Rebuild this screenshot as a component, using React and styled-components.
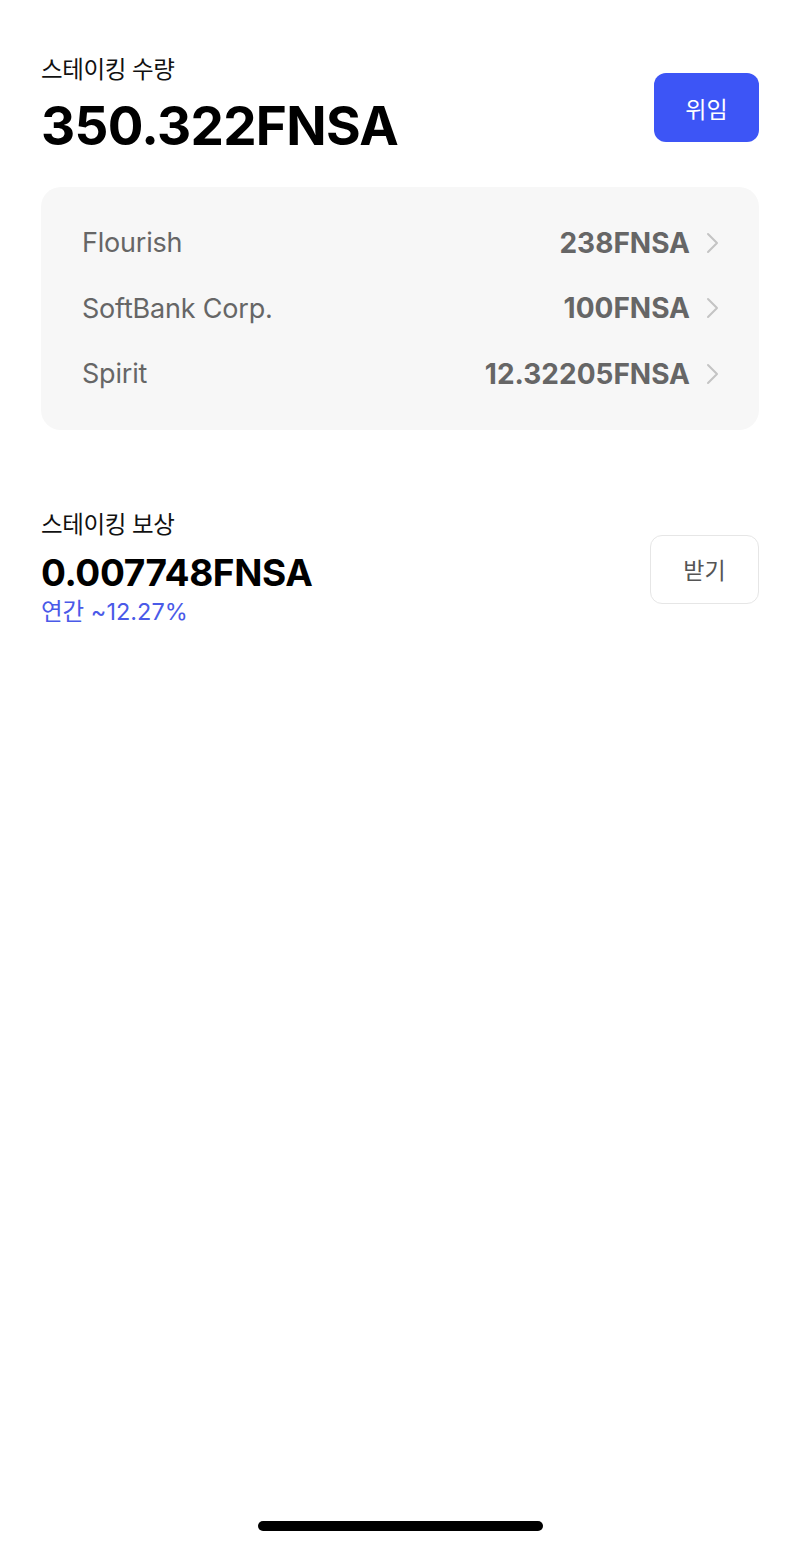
import React from 'react';
import styled, { createGlobalStyle } from 'styled-components';

const GlobalStyle = createGlobalStyle`
  html, body {
    margin: 0;
    padding: 0;
    background: #ffffff;
  }
  body {
    font-family: Inter, "Noto Sans CJK KR", "Noto Sans", sans-serif;
    -webkit-font-smoothing: antialiased;
  }
`;

const Screen = styled.div`
  width: 800px;
  height: 1548px;
  box-sizing: border-box;
  padding: 55px 41px 0;
  display: flex;
  flex-direction: column;
  position: relative;
`;

const Header = styled.div`
  display: flex;
  justify-content: space-between;
  align-items: flex-start;
`;

const Label = styled.div`
  font-size: 23.5px;
  color: #111;
  line-height: 30px;
  letter-spacing: -0.4px;
`;

const BigAmount = styled.div`
  font-size: 53px;
  font-weight: 700;
  color: #000;
  line-height: 62px;
  letter-spacing: -0.7px;
  margin-top: 10px;
`;

const DelegateButton = styled.button`
  margin-top: 18px;
  width: 105px;
  height: 69px;
  border: none;
  border-radius: 12px;
  background: #3d55f6;
  color: #fff;
  font-family: inherit;
  font-size: 23px;
  cursor: pointer;
`;

const ValidatorCard = styled.div`
  margin-top: 30px;
  background: #f7f7f7;
  border-radius: 20px;
  padding: 23px 40px 23px 41px;
  display: flex;
  flex-direction: column;
`;

const ValidatorRow = styled.div`
  height: 65.5px;
  display: flex;
  align-items: center;
  justify-content: space-between;
`;

const ValidatorName = styled.span`
  font-size: 27px;
  color: #666;
  letter-spacing: -0.2px;
`;

const ValidatorAmount = styled.span`
  display: flex;
  align-items: center;
  gap: 16px;
  font-size: 28px;
  font-weight: 700;
  color: #666;
`;

const RewardSection = styled.div`
  margin-top: 80px;
  display: flex;
  justify-content: space-between;
  align-items: flex-start;
`;

const RewardAmount = styled.div`
  font-size: 37px;
  font-weight: 700;
  color: #000;
  line-height: 46px;
  letter-spacing: -0.4px;
  margin-top: 10px;
`;

const Apr = styled.div`
  font-size: 23.5px;
  color: #4a5ae8;
  line-height: 30px;
  margin-top: 1px;
`;

const ClaimButton = styled.button`
  margin-top: 25px;
  width: 109px;
  height: 69px;
  border: 1.5px solid #e6e6e6;
  border-radius: 12px;
  background: #fff;
  color: #555;
  font-family: inherit;
  font-size: 23px;
  cursor: pointer;
`;

const HomeIndicator = styled.div`
  position: absolute;
  left: 258px;
  bottom: 17px;
  width: 285px;
  height: 10px;
  border-radius: 5px;
  background: #000;
`;

const Chevron = () => (
  <svg width="13" height="22" viewBox="0 0 13 22" fill="none">
    <path d="M2 2l9 9-9 9" stroke="#c4c4c4" strokeWidth="2" strokeLinecap="round" strokeLinejoin="round" />
  </svg>
);

const validators = [
  { name: 'Flourish', amount: '238FNSA' },
  { name: 'SoftBank Corp.', amount: '100FNSA' },
  { name: 'Spirit', amount: '12.32205FNSA' },
];

export default function App() {
  return (
    <>
      <GlobalStyle />
      <Screen>
        <Header>
          <div>
            <Label>스테이킹 수량</Label>
            <BigAmount>350.322FNSA</BigAmount>
          </div>
          <DelegateButton>위임</DelegateButton>
        </Header>
        <ValidatorCard>
          {validators.map((v) => (
            <ValidatorRow key={v.name}>
              <ValidatorName>{v.name}</ValidatorName>
              <ValidatorAmount>
                {v.amount}
                <Chevron />
              </ValidatorAmount>
            </ValidatorRow>
          ))}
        </ValidatorCard>
        <RewardSection>
          <div>
            <Label>스테이킹 보상</Label>
            <RewardAmount>0.007748FNSA</RewardAmount>
            <Apr>연간 ~12.27%</Apr>
          </div>
          <ClaimButton>받기</ClaimButton>
        </RewardSection>
        <HomeIndicator />
      </Screen>
    </>
  );
}
